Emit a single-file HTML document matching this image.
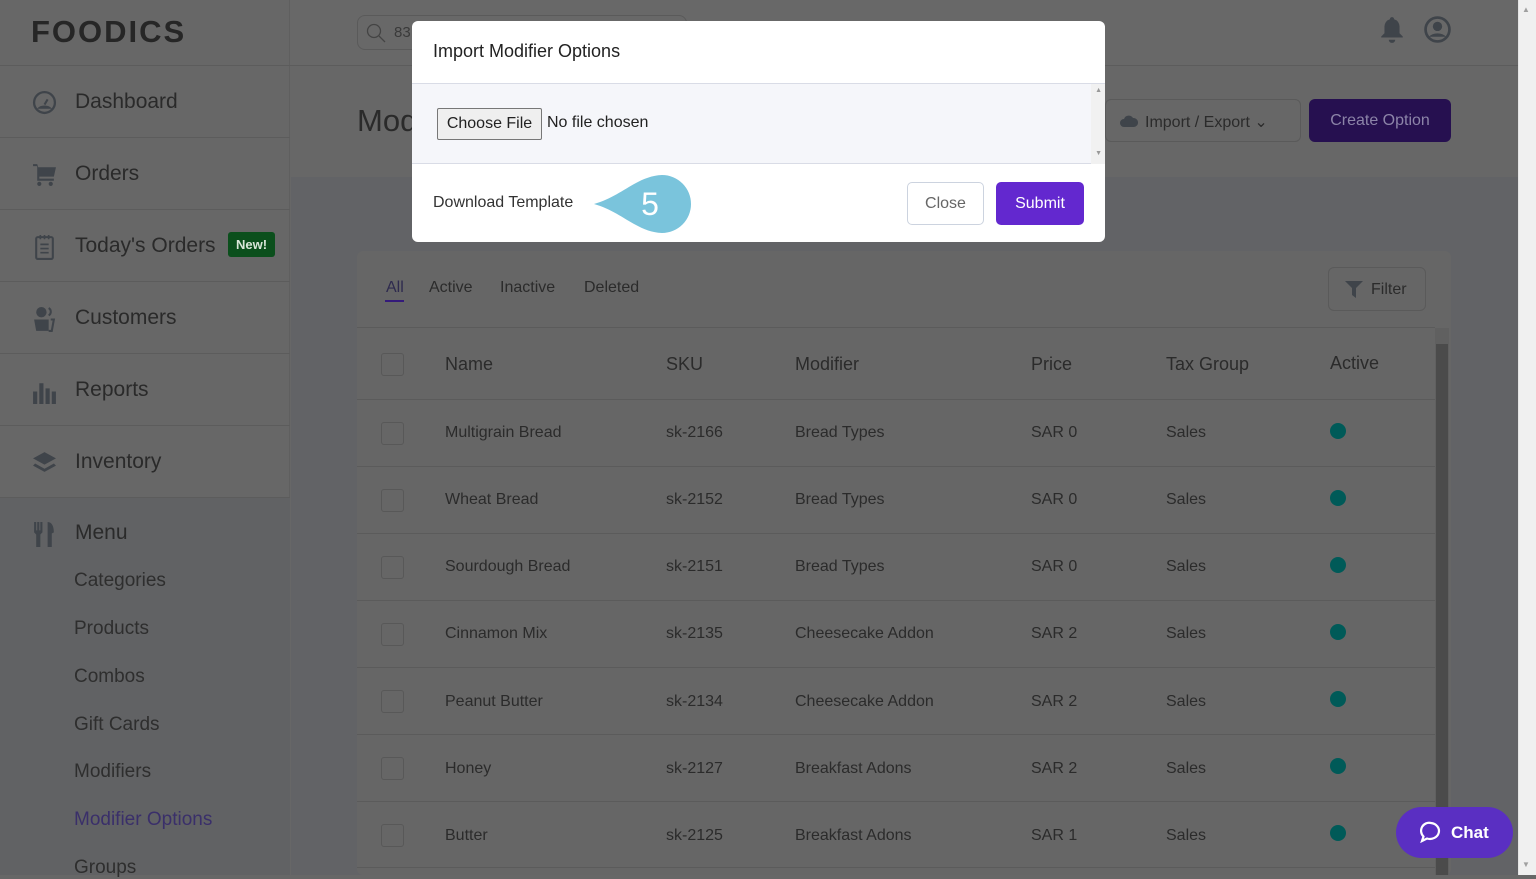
<!DOCTYPE html>
<html><head><meta charset="utf-8"><style>
*{box-sizing:border-box;margin:0;padding:0}
body{width:1536px;height:875px;overflow:hidden;background:#676767;font-family:"Liberation Sans",sans-serif;color:#2b2b2b;position:relative}
.abs{position:absolute}
.side{left:0;top:0;width:290px;height:875px;background:#676767;border-right:1px solid #5f5f5f}
.nav{position:absolute;left:0;width:290px;height:72px;border-top:1px solid #5c5c5c;font-size:21px;color:#2a2a2a}
.nav span{position:absolute;left:75px;top:24px}
.nav svg{position:absolute;left:32px;top:24px}
.sub{position:absolute;left:74px;font-size:19px;color:#2e2e2e}
.hdr{left:290px;top:0;width:1228px;height:66px;border-bottom:1px solid #5c5c5c;background:#686868}
.content{left:291px;top:177px;width:1227px;height:698px;background:#626366}
.card{left:357px;top:251px;width:1094px;height:624px;background:#666;border-radius:6px}
.row{position:absolute;left:357px;width:1078px;border-top:1px solid #5b5b5b;font-size:16px}
.row div{position:absolute;top:0}
.cb{position:absolute;left:24px;width:23px;height:23px;border:1px solid #585858;border-radius:3px}
.dot{width:16px;height:16px;border-radius:50%;background:#005a58}
</style></head><body>
<div class="abs side">
 <div class="abs" style="left:31px;top:14px;font-size:31px;font-weight:bold;letter-spacing:2px;color:#262626">FOODICS</div>
 <div class="nav" style="top:65px"><svg width="25" height="25" viewBox="0 0 24 24"><circle cx="12" cy="12" r="10" fill="none" stroke="#3f444a" stroke-width="2.2"/><path d="M5 18a8 6 0 0 1 14 0z" fill="#3f444a"/><path d="M12 14l3-5" stroke="#3f444a" stroke-width="2"/></svg><span>Dashboard</span></div>
 <div class="nav" style="top:137px"><svg width="25" height="25" viewBox="0 0 24 24"><path d="M1 2h4l1 3h17l-2 9H7v2h14v2H5V4H1z" fill="#3f444a"/><circle cx="7" cy="21" r="2" fill="#3f444a"/><circle cx="18" cy="21" r="2" fill="#3f444a"/></svg><span>Orders</span></div>
 <div class="nav" style="top:209px"><svg width="25" height="27" viewBox="0 0 24 26"><rect x="4" y="3" width="16" height="21" rx="1.5" fill="none" stroke="#3f444a" stroke-width="2"/><path d="M8 10h8M8 14h8M8 18h8M8 1v4M12 1v4M16 1v4" stroke="#3f444a" stroke-width="1.6"/></svg><span>Today's Orders</span><div style="position:absolute;left:228px;top:22px;background:#0b4f1c;color:#d8e6d8;font-size:13px;font-weight:bold;padding:5px 8px;border-radius:3px">New!</div></div>
 <div class="nav" style="top:281px"><svg width="25" height="27" viewBox="0 0 24 26"><circle cx="9" cy="6" r="5" fill="#3f444a"/><path d="M2 13h14v11H4z" fill="#3f444a"/><path d="M16 2a4 4 0 0 1 0 7M18 13h3l-2 11h-3" fill="none" stroke="#3f444a" stroke-width="2"/></svg><span>Customers</span></div>
 <div class="nav" style="top:353px"><svg width="25" height="27" viewBox="0 0 24 26"><path d="M1 13h4v12H1zM7 5h4v20H7zM13 10h4v15h-4zM19 13h4v12h-4z" fill="#3f444a"/></svg><span>Reports</span></div>
 <div class="nav" style="top:425px"><svg width="25" height="25" viewBox="0 0 24 24"><path d="M12 2l11 6-11 6L1 8z" fill="#3f444a"/><path d="M3 13l9 5 9-5 2 2-11 6-11-6z" fill="#3f444a"/></svg><span>Inventory</span></div>
 <div style="position:absolute;left:0;top:497px;width:290px;height:378px;background:#616264;border-top:1px solid #5c5c5c"></div>
 <div class="nav" style="top:497px;border:none"><svg width="25" height="27" viewBox="0 0 24 26"><path d="M2 1h2v8h1V1h2v8h1V1h2v10l-2 2v12H4V13l-2-2z" fill="#3f444a"/><path d="M15 1c4 0 6 4 6 10l-2 1v13h-4z" fill="#3f444a"/></svg><span>Menu</span></div>
 <div class="sub" style="top:570px">Categories</div>
 <div class="sub" style="top:618px">Products</div>
 <div class="sub" style="top:666px">Combos</div>
 <div class="sub" style="top:714px">Gift Cards</div>
 <div class="sub" style="top:761px">Modifiers</div>
 <div class="sub" style="top:809px;color:#3a2f6a">Modifier Options</div>
 <div class="sub" style="top:857px">Groups</div>
</div>
<div class="abs hdr">
 <div class="abs" style="left:67px;top:15px;width:330px;height:35px;border:1px solid #5a5a5a;border-radius:8px"><svg style="position:absolute;left:8px;top:7px" width="20" height="20" viewBox="0 0 20 20"><circle cx="8" cy="8" r="6.5" fill="none" stroke="#444" stroke-width="1.3"/><path d="M13 13l6 6" stroke="#444" stroke-width="1.3"/></svg><span style="position:absolute;left:36px;top:8px;font-size:15px;color:#3a3a3a">83</span></div>
 <svg class="abs" style="left:1089px;top:16px" width="26" height="28" viewBox="0 0 24 26"><path d="M12 1a2 2 0 0 1 2 2a7 7 0 0 1 5 7v6l3 3v1H2v-1l3-3v-6a7 7 0 0 1 5-7a2 2 0 0 1 2-2z" fill="#3f444a"/><path d="M9 22h6a3 3 0 0 1-6 0z" fill="#3f444a"/></svg>
 <svg class="abs" style="left:1134px;top:16px" width="27" height="27" viewBox="0 0 26 26"><circle cx="13" cy="13" r="11.5" fill="none" stroke="#3f444a" stroke-width="2.6"/><circle cx="13" cy="10" r="4.5" fill="#3f444a"/><path d="M5 20a9 6 0 0 1 16 0z" fill="#3f444a"/></svg>
</div>
<div class="abs" style="left:357px;top:103px;font-size:31px;color:#2a2a2a">Modifier Options</div>
<div class="abs" style="left:1105px;top:99px;width:196px;height:43px;border:1px solid #5a5a5a;border-radius:6px;font-size:16px;color:#2b2b2b"><svg style="position:absolute;left:14px;top:14px" width="18" height="14" viewBox="0 0 18 14"><path d="M4 13a4 4 0 0 1 0-8a5 5 0 0 1 9-1a4.5 4.5 0 0 1 1 9z" fill="#3f444a"/></svg><span style="position:absolute;left:39px;top:12px">Import / Export ⌄</span></div>
<div class="abs" style="left:1309px;top:99px;width:142px;height:43px;background:#261050;border-radius:6px;color:#8c84a8;font-size:16px;text-align:center;line-height:43px">Create Option</div>
<div class="abs content"></div>
<div class="abs card"></div>
<div class="abs" style="left:386px;top:279px;font-size:16px;color:#2e2a4e">All</div>
<div class="abs" style="left:385px;top:300px;width:19px;height:2px;background:#341a7a"></div>
<div class="abs" style="left:429px;top:279px;font-size:16px">Active</div>
<div class="abs" style="left:500px;top:279px;font-size:16px">Inactive</div>
<div class="abs" style="left:584px;top:279px;font-size:16px">Deleted</div>
<div class="abs" style="left:1328px;top:267px;width:98px;height:44px;border:1px solid #5a5a5a;border-radius:6px;font-size:16px"><svg style="position:absolute;left:16px;top:13px" width="18" height="17" viewBox="0 0 18 17"><path d="M0 0h18l-7 7v10l-4-3V7z" fill="#3f444a"/></svg><span style="position:absolute;left:42px;top:13px">Filter</span></div>
<div class="row" style="top:327px;height:72px;font-size:18px"><div class="cb" style="top:25px"></div><div style="left:88px;top:26px">Name</div><div style="left:309px;top:26px">SKU</div><div style="left:438px;top:26px">Modifier</div><div style="left:674px;top:26px">Price</div><div style="left:809px;top:26px">Tax Group</div><div style="left:973px;top:25px">Active</div></div>
<div class="row" style="top:399px;height:67px"><div class="cb" style="top:22px"></div><div style="left:88px;top:24px">Multigrain Bread</div><div style="left:309px;top:24px">sk-2166</div><div style="left:438px;top:24px">Bread Types</div><div style="left:674px;top:24px">SAR 0</div><div style="left:809px;top:24px">Sales</div><div class="dot" style="left:973px;top:23px"></div></div>
<div class="row" style="top:466px;height:67px"><div class="cb" style="top:22px"></div><div style="left:88px;top:24px">Wheat Bread</div><div style="left:309px;top:24px">sk-2152</div><div style="left:438px;top:24px">Bread Types</div><div style="left:674px;top:24px">SAR 0</div><div style="left:809px;top:24px">Sales</div><div class="dot" style="left:973px;top:23px"></div></div>
<div class="row" style="top:533px;height:67px"><div class="cb" style="top:22px"></div><div style="left:88px;top:24px">Sourdough Bread</div><div style="left:309px;top:24px">sk-2151</div><div style="left:438px;top:24px">Bread Types</div><div style="left:674px;top:24px">SAR 0</div><div style="left:809px;top:24px">Sales</div><div class="dot" style="left:973px;top:23px"></div></div>
<div class="row" style="top:600px;height:67px"><div class="cb" style="top:22px"></div><div style="left:88px;top:24px">Cinnamon Mix</div><div style="left:309px;top:24px">sk-2135</div><div style="left:438px;top:24px">Cheesecake Addon</div><div style="left:674px;top:24px">SAR 2</div><div style="left:809px;top:24px">Sales</div><div class="dot" style="left:973px;top:23px"></div></div>
<div class="row" style="top:667px;height:67px"><div class="cb" style="top:22px"></div><div style="left:88px;top:25px">Peanut Butter</div><div style="left:309px;top:25px">sk-2134</div><div style="left:438px;top:25px">Cheesecake Addon</div><div style="left:674px;top:25px">SAR 2</div><div style="left:809px;top:25px">Sales</div><div class="dot" style="left:973px;top:23px"></div></div>
<div class="row" style="top:734px;height:67px"><div class="cb" style="top:22px"></div><div style="left:88px;top:25px">Honey</div><div style="left:309px;top:25px">sk-2127</div><div style="left:438px;top:25px">Breakfast Adons</div><div style="left:674px;top:25px">SAR 2</div><div style="left:809px;top:25px">Sales</div><div class="dot" style="left:973px;top:23px"></div></div>
<div class="row" style="top:801px;height:67px;border-bottom:1px solid #5b5b5b"><div class="cb" style="top:22px"></div><div style="left:88px;top:25px">Butter</div><div style="left:309px;top:25px">sk-2125</div><div style="left:438px;top:25px">Breakfast Adons</div><div style="left:674px;top:25px">SAR 1</div><div style="left:809px;top:25px">Sales</div><div class="dot" style="left:973px;top:23px"></div></div>
<div class="abs" style="left:1435px;top:328px;width:14px;height:547px;background:#606060"></div>
<div class="abs" style="left:1436px;top:344px;width:12px;height:531px;background:#4b4b4b"></div>
<div class="abs" style="left:1518px;top:0;width:18px;height:875px;background:#f0f0f0;border-left:1px solid #e4e4e4"></div>
<div class="abs" style="left:1522px;top:5px;font-size:8px;color:#a0a0a0">▲</div>
<div class="abs" style="left:1522px;top:860px;font-size:8px;color:#a0a0a0">▼</div>
<div class="abs" style="left:1396px;top:807px;width:117px;height:51px;background:#5a2fc2;border-radius:26px;color:#fff;font-weight:bold;font-size:17px"><svg style="position:absolute;left:24px;top:14px" width="22" height="22" viewBox="0 0 22 22"><path d="M11 2a9 8 0 1 1-4 15.5L2 20l1.5-4.5A8 8 0 0 1 11 2z" fill="none" stroke="#fff" stroke-width="2.2"/></svg><span style="position:absolute;left:55px;top:16px">Chat</span></div>
<!-- modal -->
<div class="abs" style="left:412px;top:21px;width:693px;height:221px;background:#fff;border-radius:6px;overflow:hidden">
 <div style="position:absolute;left:21px;top:20px;font-size:18px;color:#222">Import Modifier Options</div>
 <div style="position:absolute;left:0;top:62px;width:693px;height:81px;background:#f5f6fa;border-top:1px solid #d9dce6;border-bottom:1px solid #d9dce6">
  <div style="position:absolute;left:25px;top:24px;width:105px;height:32px;border:1px solid #777;background:#efefef;border-radius:2px;font-size:16px;color:#222;text-align:center;line-height:30px">Choose File</div>
  <div style="position:absolute;left:135px;top:30px;font-size:16px;color:#222">No file chosen</div>
  <div style="position:absolute;right:0;top:0;width:14px;height:80px;background:#f1f1f1"></div>
  <div style="position:absolute;right:3px;top:3px;font-size:7px;color:#999">▲</div>
  <div style="position:absolute;right:3px;top:66px;font-size:7px;color:#999">▼</div>
 </div>
 <div style="position:absolute;left:21px;top:173px;font-size:16px;color:#333">Download Template</div>
 <svg style="position:absolute;left:180px;top:153px" width="100" height="62" viewBox="0 0 100 62"><path d="M2 30C30 22 45 2 70 1a29 29 0 0 1 0 58C45 58 30 38 2 30z" fill="#7ac4dc"/><text x="58" y="41" font-family="Liberation Sans" font-size="32" fill="#fff" text-anchor="middle">5</text></svg>
 <div style="position:absolute;left:495px;top:161px;width:77px;height:43px;border:1px solid #ccd3df;border-radius:5px;font-size:16px;color:#666;text-align:center;line-height:41px">Close</div>
 <div style="position:absolute;left:584px;top:161px;width:88px;height:43px;background:#6328cf;border-radius:5px;font-size:16px;color:#fff;text-align:center;line-height:43px">Submit</div>
</div>
</body></html>
